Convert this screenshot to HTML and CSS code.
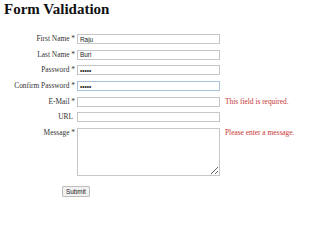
FILE: index.html
```html
<!DOCTYPE html>
<html>
<head>
<meta charset="utf-8">
<title>Form Validation</title>
<link rel="stylesheet" href="styles.css">
</head>
<body>
<h1 class="title">Form Validation</h1>
<form class="form">
  <label class="lbl">First Name *</label>
  <input class="field" type="text" value="Raju">
  <span class="err"></span>

  <label class="lbl">Last Name *</label>
  <input class="field" type="text" value="Buri">
  <span class="err"></span>

  <label class="lbl">Password *</label>
  <input class="field" type="password" value="12345">
  <span class="err"></span>

  <label class="lbl">Confirm Password *</label>
  <input class="field focused" type="password" value="12345">
  <span class="err"></span>

  <label class="lbl">E-Mail *</label>
  <input class="field" type="text">
  <span class="err">This field is required.</span>

  <label class="lbl lbl-plain">URL</label>
  <input class="field" type="text">
  <span class="err"></span>

  <label class="lbl">Message *</label>
  <textarea class="area"></textarea>
  <span class="err">Please enter a message.</span>

  <div class="actions">
    <button class="btn" type="button">Submit</button>
  </div>
</form>
</body>
</html>
```
FILE: styles.css
```css
html, body {
  margin: 0;
  padding: 0;
  background: #ffffff;
}
body {
  padding: 1px 0 0 4px;
  font-family: "Liberation Serif", "Times New Roman", serif;
  color: #222;
}
.title {
  margin: 0;
  font-size: 15px;
  line-height: 17px;
  font-weight: bold;
  color: #111;
}
.form {
  margin-top: 16px;
  display: grid;
  grid-template-columns: 71px 143px auto;
  column-gap: 2px;
  row-gap: 5.7px;
  align-items: start;
}
.lbl {
  text-align: right;
  font-size: 7.4px;
  line-height: 10px;
  white-space: nowrap;
  color: #333;
}
.lbl-plain {
  padding-right: 2px;
}
.field {
  box-sizing: border-box;
  width: 143px;
  height: 10px;
  margin: 0;
  padding: 0 2px;
  border: 1px solid #c6c6c6;
  border-radius: 0;
  font-family: "Liberation Sans", Arial, sans-serif;
  font-size: 6.4px;
  color: #222;
  background: #fff;
  outline: none;
}
.field.focused {
  border-color: #a6c2df;
}
.area {
  box-sizing: border-box;
  width: 143px;
  height: 48px;
  margin: 0;
  padding: 1px 2px;
  border: 1px solid #c6c6c6;
  font-family: "Liberation Sans", Arial, sans-serif;
  font-size: 6.4px;
  background: #fff;
}
.err {
  margin-left: 3px;
  font-size: 7.4px;
  line-height: 10px;
  color: #c83434;
  white-space: nowrap;
}
.actions {
  grid-column: 1 / 4;
  display: flex;
  padding-left: 58px;
  margin-top: 4px;
}
.btn {
  box-sizing: border-box;
  height: 11px;
  padding: 0 3px;
  margin: 0;
  border: 1px solid #bdbdbd;
  border-radius: 1px;
  background: #f2f2f2;
  font-family: "Liberation Sans", Arial, sans-serif;
  font-size: 6.4px;
  line-height: 9px;
  color: #222;
}
```
